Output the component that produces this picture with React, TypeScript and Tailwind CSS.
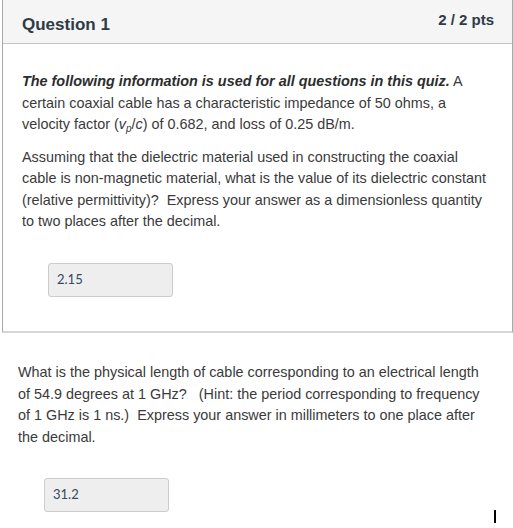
import React from "react"

const font = { fontFamily: "'Liberation Sans', Arial, sans-serif" }

function AnswerBox({ value }: { value: string }) {
  return (
    <div className="w-[125px] h-[34px] rounded-[3px] border border-[#cccccc] bg-[#eeeeee] flex items-center pl-[8px] font-['Lato',sans-serif] text-[13px] text-[#34495e]">
      {value}
    </div>
  )
}

export default function App() {
  return (
    <div className="relative w-[513px] h-[528px] bg-white overflow-hidden text-[#2d3b45]" style={font}>
      {/* Question 1 panel */}
      <div className="ml-[2px] w-[511px] h-[333px] border-l border-r border-b-2 border-l-[#a9a9a9] border-r-[#a9a9a9] border-b-[#d6d6d6]">
        <div className="h-[44px] bg-[#f5f5f5] border-b border-[#c4c4c4] flex justify-between pl-[19px] pr-[18px]">
          <h3 className="pt-[15px] text-[17px] font-bold leading-[20px]">Question 1</h3>
          <span className="pt-[11px] text-[15px] font-bold leading-[17px]">2 / 2 pts</span>
        </div>
        <div className="pl-[19px] pr-[20px] pt-[27px] text-[14.4px] leading-[21.5px] text-[#3a3a3a]">
          <p>
            <strong className="italic text-[#2d2d2d]">The following information is used for all questions in this quiz.</strong> A
            certain coaxial cable has a characteristic impedance of 50 ohms, a velocity factor (
            <i>v</i>
            <sub className="italic text-[10px] leading-none">p</sub>/<i>c</i>) of 0.682, and loss of 0.25 dB/m.
          </p>
          <p className="mt-[11px] whitespace-pre-wrap">
            Assuming that the dielectric material used in constructing the coaxial cable is non-magnetic material, what is the value of its dielectric constant (relative permittivity)?  Express your answer as a dimensionless quantity to two places after the decimal.
          </p>
          <div className="mt-[30px] ml-[26px]">
            <AnswerBox value="2.15" />
          </div>
        </div>
      </div>

      {/* Question 2 */}
      <div className="pl-[18px] pr-[22px] pt-[29px] text-[14.4px] leading-[21.5px] text-[#3a3a3a]">
        <p className="whitespace-pre-wrap">
          What is the physical length of cable corresponding to an electrical length of 54.9 degrees at 1 GHz?   (Hint: the period corresponding to frequency of 1 GHz is 1 ns.)  Express your answer in millimeters to one place after the decimal.
        </p>
        <div className="mt-[30px] ml-[26px]">
          <AnswerBox value="31.2" />
        </div>
      </div>

      {/* text cursor */}
      <div className="absolute left-[494px] top-[510px] w-[2px] h-[13px] bg-black" />
    </div>
  )
}
